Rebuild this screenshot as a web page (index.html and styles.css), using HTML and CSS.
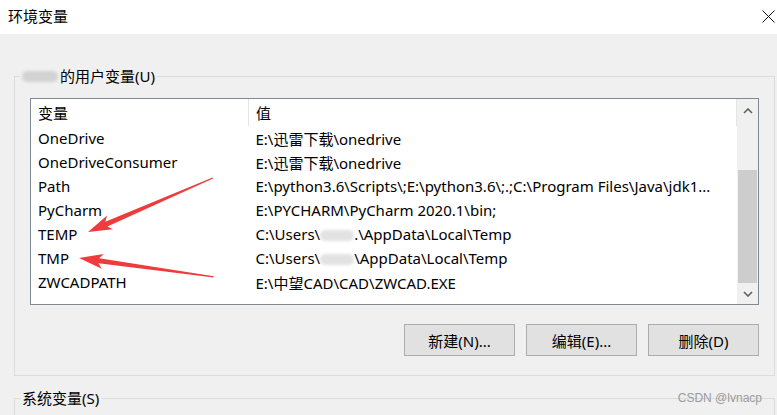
FILE: index.html
```html
<!DOCTYPE html>
<html lang="zh-CN">
<head>
    <meta charset="UTF-8">
    <title>环境变量</title>
    <link rel="stylesheet" href="styles.css">
</head>
<body>
<div class="window">
    <div class="titlebar">
        <span class="title">环境变量</span>
        <svg class="close" width="13" height="13" viewBox="0 0 13 13">
            <path d="M0.5 0.5 L12.5 12.5 M12.5 0.5 L0.5 12.5" stroke="#111" stroke-width="1" fill="none"/>
        </svg>
    </div>

    <div class="content">
        <fieldset class="group">
            <legend><span class="blur blur-name"></span>的用户变量(U)</legend>

            <div class="listbox">
                <table class="vars">
                    <thead>
                    <tr>
                        <th class="col-name">变量</th>
                        <th class="col-value">值</th>
                    </tr>
                    </thead>
                    <tbody>
                    <tr><td>OneDrive</td><td>E:\迅雷下载\onedrive</td></tr>
                    <tr><td>OneDriveConsumer</td><td>E:\迅雷下载\onedrive</td></tr>
                    <tr><td>Path</td><td>E:\python3.6\Scripts\;E:\python3.6\;.;C:\Program Files\Java\jdk1...</td></tr>
                    <tr><td>PyCharm</td><td>E:\PYCHARM\PyCharm 2020.1\bin;</td></tr>
                    <tr><td>TEMP</td><td>C:\Users\<span class="blur blur-user"></span>.\AppData\Local\Temp</td></tr>
                    <tr><td>TMP</td><td>C:\Users\<span class="blur blur-user"></span>\AppData\Local\Temp</td></tr>
                    <tr><td>ZWCADPATH</td><td>E:\中望CAD\CAD\ZWCAD.EXE</td></tr>
                    </tbody>
                </table>

                <div class="scrollbar">
                    <div class="sb-btn sb-up">
                        <svg width="10" height="6" viewBox="0 0 10 6"><path d="M1 5 L5 1 L9 5" stroke="#606060" stroke-width="1.6" fill="none"/></svg>
                    </div>
                    <div class="sb-track"><div class="sb-thumb"></div></div>
                    <div class="sb-btn sb-down">
                        <svg width="10" height="6" viewBox="0 0 10 6"><path d="M1 1 L5 5 L9 1" stroke="#606060" stroke-width="1.6" fill="none"/></svg>
                    </div>
                </div>
            </div>

            <div class="buttons">
                <button class="btn">新建(N)...</button>
                <button class="btn">编辑(E)...</button>
                <button class="btn">删除(D)</button>
            </div>
        </fieldset>

        <fieldset class="group group-system">
            <legend>系统变量(S)</legend>
        </fieldset>
    </div>

    <!-- 截图上的红色箭头 -->
    <svg class="arrows" width="777" height="415" viewBox="0 0 777 415">
        <g transform="translate(88,232) rotate(-23.4)" fill="#ee3b3b">
            <path d="M0 0 L24 -7.5 L20 -2.6 L136 -0.6 L136 0.6 L20 2.6 L24 7.5 Z"/>
        </g>
        <g transform="translate(79,258) rotate(8)" fill="#ee3b3b">
            <path d="M0 0 L24 -7.5 L20 -2.6 L136 -0.6 L136 0.6 L20 2.6 L24 7.5 Z"/>
        </g>
    </svg>

    <div class="watermark">CSDN @lvnacp</div>
</div>
</body>
</html>
```

FILE: styles.css
```css
html, body {
    margin: 0;
    padding: 0;
}

body {
    font-family: "Noto Sans", "Noto Sans CJK SC", sans-serif;
    font-size: 15px;
    color: #000;
    background-color: #f0f0f0;
}

.window {
    position: relative;
    width: 777px;
    height: 415px;
    overflow: hidden;
    background-color: #f0f0f0;
}

/* barra de título */
.titlebar {
    height: 34px;
    background-color: #fff;
    display: flex;
    align-items: center;
    justify-content: space-between;
    padding: 0 2px 2px 8px;
    box-sizing: border-box;
}

.title {
    font-size: 15px;
    line-height: 20px;
}

.close {
    display: block;
}

.content {
    padding-top: 32px;
}

/* group box */
.group {
    margin: 0 2px 0 14px;
    padding: 12px 15px 19px 15px;
    border: 1px solid #dcdcdc;
    min-width: 0;
}

.group legend {
    margin-left: -10px;
    padding: 0 2px;
    line-height: 20px;
    display: flex;
    align-items: center;
}

.group-system {
    margin-top: 12px;
    height: 100px;
}

.blur {
    display: inline-block;
    border-radius: 6px;
    filter: blur(1.5px);
}

.blur-name {
    width: 36px;
    height: 11px;
    background-color: #d2d2d2;
    margin-right: 2px;
}

.blur-user {
    width: 34px;
    height: 11px;
    background-color: #e2e2e2;
    vertical-align: middle;
}

/* lista */
.listbox {
    display: flex;
    height: 207px;
    box-sizing: border-box;
    border: 1px solid #828790;
    background-color: #fff;
}

.vars {
    flex: 1;
    border-collapse: collapse;
    table-layout: fixed;
    align-self: flex-start;
    width: 100%;
}

.vars th, .vars td {
    padding: 0 7px;
    text-align: left;
    font-weight: normal;
    white-space: nowrap;
    overflow: hidden;
    text-overflow: ellipsis;
}

.vars th {
    height: 27px;
    border-right: 1px solid #e5e5e5;
}

.vars th.col-name {
    width: 203px;
}

.vars td {
    height: 24px;
}

.scrollbar {
    width: 21px;
    display: flex;
    flex-direction: column;
    background-color: #f0f0f0;
}

.sb-btn {
    display: flex;
    align-items: center;
    justify-content: center;
}

.sb-up {
    height: 23px;
}

.sb-down {
    height: 21px;
}

.sb-track {
    flex: 1;
    display: flex;
    flex-direction: column;
}

.sb-thumb {
    margin: auto 1px 0 1px;
    height: 113px;
    background-color: #cdcdcd;
}

/* botões */
.buttons {
    display: flex;
    justify-content: flex-end;
    gap: 11px;
    margin-top: 19px;
}

.btn {
    width: 111px;
    height: 32px;
    font-family: inherit;
    font-size: 15px;
    color: #000;
    background-color: #e1e1e1;
    border: 1px solid #adadad;
    border-radius: 0;
    padding: 0;
}

.arrows {
    position: absolute;
    top: 0;
    left: 0;
    pointer-events: none;
}

.watermark {
    position: absolute;
    right: 15px;
    top: 390px;
    font-family: "Liberation Sans", sans-serif;
    font-size: 12px;
    line-height: 16px;
    color: #9a9a9a;
}
```
